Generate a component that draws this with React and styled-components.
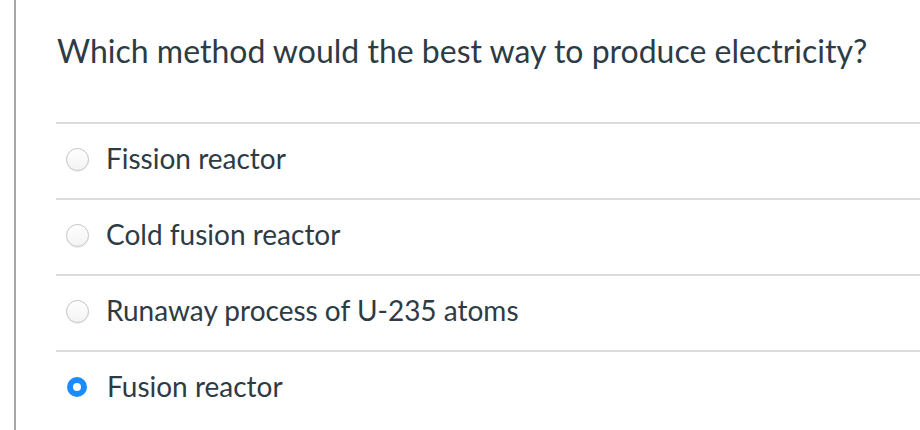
import React from "react";
import styled, { createGlobalStyle } from "styled-components";

const GlobalStyle = createGlobalStyle`
  html, body {
    margin: 0;
    padding: 0;
    background: #fff;
  }
  body {
    font-family: Lato, "Liberation Sans", sans-serif;
    color: #2d3b45;
  }
`;

const Page = styled.div`
  padding-left: 14px;
  height: 430px;
  overflow: hidden;
`;

const Panel = styled.div`
  border-left: 2px solid #a8a8a8;
  height: 100%;
  padding-left: 40px;
`;

const Question = styled.h2`
  margin: 0;
  padding: 27px 0 0 1px;
  font-size: 32px;
  font-weight: 400;
  line-height: 48px;
  height: 122px;
  box-sizing: border-box;
`;

const Answers = styled.div`
  display: flex;
  flex-direction: column;
`;

const Row = styled.label`
  display: flex;
  align-items: center;
  gap: 17px;
  height: 76px;
  box-sizing: border-box;
  border-top: 2px solid #dcdcdc;
  padding-left: 10px;
  padding-bottom: 6px;
  font-size: 28px;
  cursor: pointer;
`;

const Radio = styled.span`
  flex: none;
  width: ${(p) => (p.checked ? "20px" : "23px")};
  height: ${(p) => (p.checked ? "20px" : "23px")};
  margin-left: ${(p) => (p.checked ? "1px" : "0")};
  margin-right: ${(p) => (p.checked ? "3px" : "0")};
  margin-top: 2px;
  border-radius: 50%;
  box-sizing: border-box;
  position: relative;
  background: ${(p) =>
    p.checked ? "#1a8cff" : "linear-gradient(#ffffff, #f3f3f3)"};
  border: ${(p) => (p.checked ? "none" : "1px solid #c4c4c4")};
  box-shadow: ${(p) => (p.checked ? "none" : "0 1px 1px rgba(0,0,0,0.06)")};

  &::after {
    content: "";
    display: ${(p) => (p.checked ? "block" : "none")};
    position: absolute;
    width: 8px;
    height: 8px;
    border-radius: 50%;
    background: #fff;
    left: 6px;
    top: 6px;
  }
`;

const answers = [
  { text: "Fission reactor", checked: false },
  { text: "Cold fusion reactor", checked: false },
  { text: "Runaway process of U-235 atoms", checked: false },
  { text: "Fusion reactor", checked: true },
];

export default function App() {
  return (
    <>
      <GlobalStyle />
      <Page>
        <Panel>
          <Question>Which method would the best way to produce electricity?</Question>
          <Answers>
            {answers.map((a) => (
              <Row key={a.text}>
                <Radio checked={a.checked} />
                <span>{a.text}</span>
              </Row>
            ))}
          </Answers>
        </Panel>
      </Page>
    </>
  );
}
